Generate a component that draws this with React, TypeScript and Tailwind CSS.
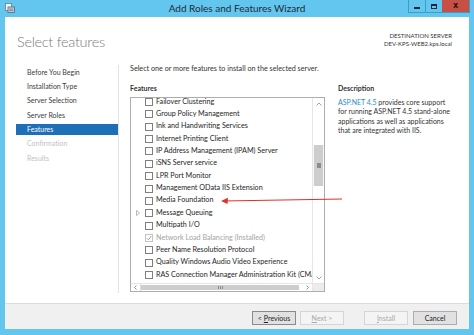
import React from 'react';

const navItems = [
  { label: 'Before You Begin', state: 'normal' },
  { label: 'Installation Type', state: 'normal' },
  { label: 'Server Selection', state: 'normal' },
  { label: 'Server Roles', state: 'normal' },
  { label: 'Features', state: 'active' },
  { label: 'Confirmation', state: 'disabled' },
  { label: 'Results', state: 'disabled' },
];

const features = [
  { label: 'Failover Clustering' },
  { label: 'Group Policy Management' },
  { label: 'Ink and Handwriting Services' },
  { label: 'Internet Printing Client' },
  { label: 'IP Address Management (IPAM) Server' },
  { label: 'iSNS Server service' },
  { label: 'LPR Port Monitor' },
  { label: 'Management OData IIS Extension' },
  { label: 'Media Foundation' },
  { label: 'Message Queuing', expandable: true },
  { label: 'Multipath I/O' },
  { label: 'Network Load Balancing (Installed)', installed: true },
  { label: 'Peer Name Resolution Protocol' },
  { label: 'Quality Windows Audio Video Experience' },
  { label: 'RAS Connection Manager Administration Kit (CMAK)' },
];

function TitleBar() {
  return (
    <div className="h-[17px] flex items-start shrink-0">
      <div className="w-[160px] pl-[5px] pt-[3px]">
        <svg width="10" height="10" viewBox="0 0 10 10">
          <rect x="0.5" y="0.5" width="6" height="7" fill="#f4f4f4" stroke="#6d7d8c" strokeWidth="0.8" />
          <rect x="3" y="4" width="6.5" height="5.5" fill="#c9d3dc" stroke="#56677a" strokeWidth="0.8" />
          <line x1="4.2" y1="6" x2="8.4" y2="6" stroke="#56677a" strokeWidth="0.7" />
          <line x1="4.2" y1="7.6" x2="8.4" y2="7.6" stroke="#56677a" strokeWidth="0.7" />
        </svg>
      </div>
      <div className="flex-1 h-[16px] flex items-center justify-center text-[10px] text-[#1f2a36] font-['Lato',sans-serif]">
        Add Roles and Features Wizard
      </div>
      <div className="w-[160px] flex justify-end pr-[4px]">
        <div className="flex h-[13px] border-x border-b border-[#3f9cc4]">
          <div className="w-[17px] flex items-center justify-center border-r border-[#3f9cc4]">
            <div className="w-[6px] h-[2px] bg-[#1b2b3a] mt-[3px]" />
          </div>
          <div className="w-[16px] flex items-center justify-center">
            <div className="w-[6px] h-[5px] border border-[#1b2b3a] border-t-2" />
          </div>
          <div className="w-[27px] bg-[#c75046] flex items-center justify-center text-[8px] font-bold text-[#2a1212] font-['DejaVu_Sans',sans-serif] leading-none">
            x
          </div>
        </div>
      </div>
    </div>
  );
}

function Checkbox({ checked, disabled }: { checked?: boolean; disabled?: boolean }) {
  return (
    <div
      className={
        disabled
          ? 'w-[8px] h-[8px] border border-[#c4c4c4] bg-white flex items-center justify-center shrink-0'
          : 'w-[8px] h-[8px] border border-[#7f7f7f] bg-white flex items-center justify-center shrink-0'
      }
    >
      {checked && (
        <svg width="6" height="6" viewBox="0 0 6 6">
          <path d="M0.8 3.2 L2.4 4.8 L5.3 1" fill="none" stroke="#a0a0a0" strokeWidth="1" />
        </svg>
      )}
    </div>
  );
}

function FeatureList() {
  return (
    <div className="w-[195px] h-[195px] border border-[#abadb3] flex flex-col bg-white">
      <div className="h-[185px] flex">
        <div className="flex-1 overflow-hidden">
          <div className="-mt-[2.2px]">
            {features.map((f) => (
              <div key={f.label} className="h-[12.36px] flex items-center whitespace-nowrap">
                <div className="w-[14px] flex items-center justify-center shrink-0">
                  {f.expandable && (
                    <svg width="4" height="6" viewBox="0 0 4 6">
                      <path d="M0.5 0.5 L3.5 3 L0.5 5.5 Z" fill="none" stroke="#a6a6a6" strokeWidth="0.8" />
                    </svg>
                  )}
                </div>
                <Checkbox checked={f.installed} disabled={f.installed} />
                <span className={f.installed ? 'ml-[3px] text-[#a3a3a3]' : 'ml-[3px] text-[#262626]'}>
                  {f.label}
                </span>
              </div>
            ))}
          </div>
        </div>
        {/* vertical scrollbar */}
        <div className="w-[12px] border-l border-[#e6e6e6] bg-[#f7f7f7] flex flex-col">
          <div className="h-[11px] flex items-center justify-center bg-white">
            <svg width="6" height="4" viewBox="0 0 6 4">
              <path d="M0.5 3.5 L3 1 L5.5 3.5" fill="none" stroke="#8a8a8a" strokeWidth="0.8" />
            </svg>
          </div>
          <div className="h-[36px] bg-white" />
          <div className="h-[41px] mx-[1px] bg-[#cdcdcd] flex items-center justify-center">
            <div className="w-[4px] h-[5px] bg-[#8c8c8c]" />
          </div>
          <div className="flex-1 bg-white" />
          <div className="h-[10px] flex items-center justify-center bg-white">
            <svg width="6" height="4" viewBox="0 0 6 4">
              <path d="M0.5 0.5 L3 3 L5.5 0.5" fill="none" stroke="#8a8a8a" strokeWidth="0.8" />
            </svg>
          </div>
        </div>
      </div>
      {/* horizontal scrollbar */}
      <div className="flex-1 flex border-t border-[#e6e6e6]">
        <div className="flex-1 flex bg-white">
          <div className="w-[10px] flex items-center justify-center border-r border-[#dcdcdc]">
            <svg width="3" height="5" viewBox="0 0 3 5">
              <path d="M2.5 0.5 L0.5 2.5 L2.5 4.5" fill="none" stroke="#7a7a7a" strokeWidth="0.8" />
            </svg>
          </div>
          <div className="w-[158px] my-[1px] bg-[#cdcdcd] flex items-center justify-center">
            <div className="w-[5px] h-[3px] border-x border-[#8c8c8c] flex justify-center">
              <div className="w-[1px] h-full bg-[#8c8c8c]" />
            </div>
          </div>
          <div className="flex-1" />
          <div className="w-[10px] flex items-center justify-center">
            <svg width="3" height="5" viewBox="0 0 3 5">
              <path d="M0.5 0.5 L2.5 2.5 L0.5 4.5" fill="none" stroke="#7a7a7a" strokeWidth="0.8" />
            </svg>
          </div>
        </div>
        <div className="w-[12px] bg-[#ececec] border-l border-[#e6e6e6]" />
      </div>
    </div>
  );
}

function WizardButton({
  children,
  disabled,
  focused,
}: {
  children: React.ReactNode;
  disabled?: boolean;
  focused?: boolean;
}) {
  let cls = 'w-[44px] h-[14px] flex items-center justify-center text-[7px] border ';
  if (disabled) cls += 'bg-[#f4f4f4] border-[#d5d5d5] text-[#a8a8a8]';
  else if (focused) cls += 'bg-[#e1e1e1] border-[#8a8a8a] text-[#222]';
  else cls += 'bg-[#e1e1e1] border-[#adadad] text-[#222]';
  return <div className={cls}>{children}</div>;
}

export default function App() {
  return (
    <div className="w-[474px] h-[335px] bg-[#63c6ee] flex flex-col relative overflow-hidden font-['Lato',sans-serif]">
      <TitleBar />
      <div className="mx-[5px] mb-[6px] flex-1 bg-white flex flex-col">
        {/* header */}
        <div className="h-[45px] shrink-0 flex justify-between pl-[12px] pr-[17px]">
          <div className="pt-[15px] text-[14.5px] leading-[20px] font-light tracking-[-0.3px] text-[#7b7b7b]">
            Select features
          </div>
          <div className="pt-[15px] text-right text-[6px] leading-[8px] text-[#333]">
            <div>DESTINATION SERVER</div>
            <div>DEV-KPS-WEB2.kps.local</div>
          </div>
        </div>

        {/* body */}
        <div className="h-[241px] shrink-0 flex">
          <div className="w-[114px] mt-[3px] mb-[10px] border-r border-[#e3e3e3] pt-[1.5px] flex flex-col gap-[3.35px]">
            {navItems.map((item) => (
              <div
                key={item.label}
                className={
                  item.state === 'active'
                    ? 'ml-[11px] w-[102px] h-[11px] pl-[11px] flex items-center text-[7px] bg-[#1d6fb8] text-white'
                    : item.state === 'disabled'
                    ? 'ml-[11px] w-[102px] h-[11px] pl-[11px] flex items-center text-[7px] text-[#c2c2c2]'
                    : 'ml-[11px] w-[102px] h-[11px] pl-[11px] flex items-center text-[7px] text-[#3c3c3c]'
                }
              >
                {item.label}
              </div>
            ))}
          </div>

          <div className="flex-1 pl-[11px] flex flex-col">
            <p className="mt-[2px] h-[10px] leading-[10px] text-[7.2px] text-[#333]">
              Select one or more features to install on the selected server.
            </p>
            <div className="mt-[9px] flex">
              <div className="flex flex-col text-[7.2px]">
                <div className="h-[10px] leading-[10px] text-[7px] font-bold text-[#333]">Features</div>
                <div className="mt-[4px]">
                  <FeatureList />
                </div>
              </div>
              <div className="ml-[13px] w-[116px] flex flex-col">
                <div className="h-[10px] leading-[10px] text-[7px] font-bold text-[#333]">Description</div>
                <p className="mt-[5px] text-[7px] leading-[9.3px] text-[#333]">
                  <span className="text-[#2a8fbf]">ASP.NET 4.5</span> provides core support for running ASP.NET 4.5
                  stand-alone applications as well as applications that are integrated with IIS.
                </p>
              </div>
            </div>
          </div>
        </div>

        {/* footer */}
        <div className="flex-1 bg-[#f0f0f0] border-t border-[#dcdcdc] flex justify-end items-start pt-[7px] pr-[12px]">
          <WizardButton focused>
            &lt; <span className="underline ml-[2px]">P</span>revious
          </WizardButton>
          <div className="ml-[4px]">
            <WizardButton disabled>
              <span className="underline">N</span>ext &gt;
            </WizardButton>
          </div>
          <div className="ml-[20px]">
            <WizardButton disabled>
              <span className="underline">I</span>nstall
            </WizardButton>
          </div>
          <div className="ml-[5px]">
            <WizardButton>Cancel</WizardButton>
          </div>
        </div>
      </div>

      {/* red annotation arrow */}
      <svg className="absolute left-[218px] top-[194px]" width="128" height="12" viewBox="0 0 128 12">
        <line x1="5" y1="7" x2="124" y2="5" stroke="#e0302c" strokeWidth="1.2" />
        <path d="M3 7 L10 3.8 L9.5 10 Z" fill="#e0302c" />
      </svg>
    </div>
  );
}
